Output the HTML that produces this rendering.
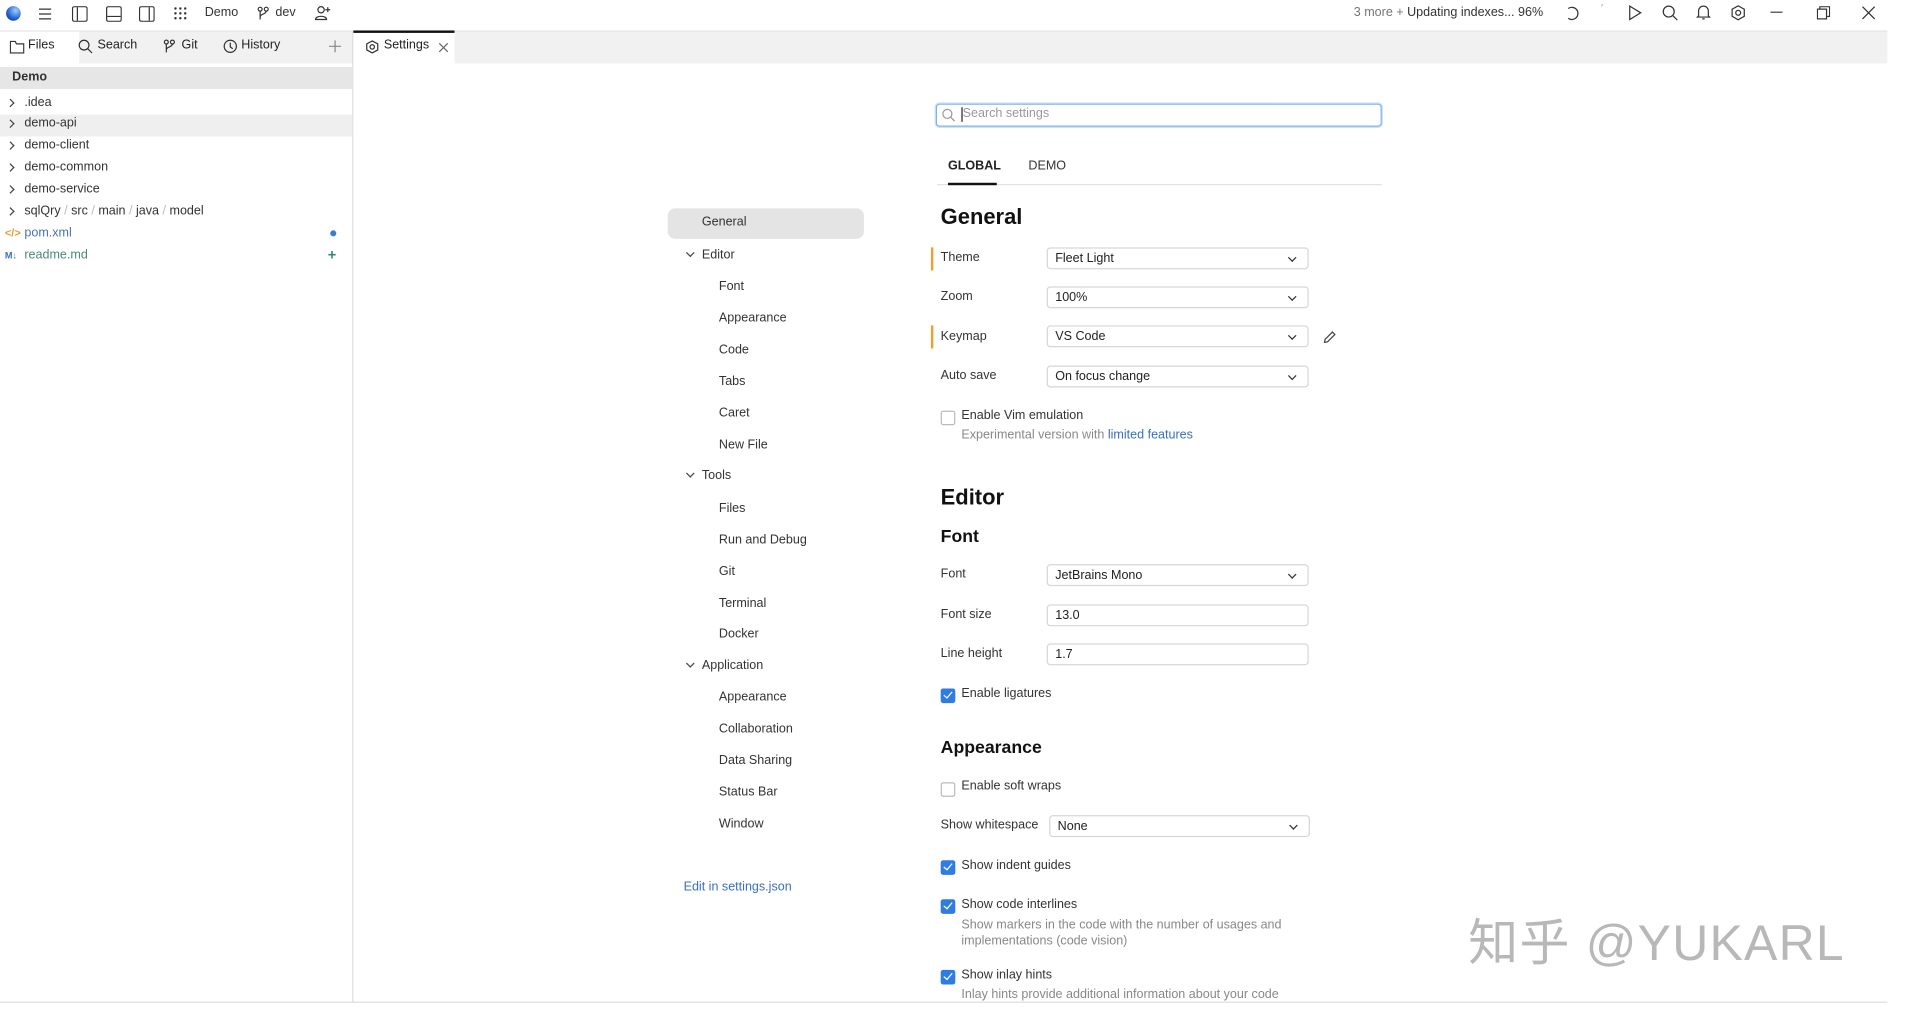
<!DOCTYPE html>
<html><head><meta charset="utf-8"><style>
html,body{margin:0;padding:0;background:#fff;width:1910px;height:1012px;overflow:hidden}
#w{position:absolute;left:0;top:0;width:1570px;height:832px;transform:scale(1.2185);transform-origin:0 0;font-family:"Liberation Sans",Arial,sans-serif;font-size:10.5px;color:#222}
.a{position:absolute;white-space:nowrap}
svg{position:absolute}
.dd{position:absolute;left:859px;width:215px;height:18px;border:1px solid #d6d6d6;border-radius:3px;background:#fff;box-sizing:border-box;padding-left:6px;line-height:17px;font-size:10.3px}
.dd.s::after{content:"";position:absolute;right:10px;top:5px;width:4px;height:4px;border-right:1.2px solid #333;border-bottom:1.2px solid #333;transform:rotate(45deg)}
.cb{position:absolute;left:772px;width:10px;height:10px;border:1px solid #bbb;border-radius:2px;background:#fff}
.cb.on{background:#2f7de1;border-color:#2f7de1}
.cb.on::after{content:"";position:absolute;left:3px;top:0px;width:3px;height:6px;border-right:1.5px solid #fff;border-bottom:1.5px solid #fff;transform:rotate(40deg)}
.lb{position:absolute;left:772px;font-size:10.3px;color:#333}
.nv{position:absolute;font-size:10.3px;color:#333}
.chev{position:absolute;width:4px;height:4px;border-right:1.2px solid #444;border-bottom:1.2px solid #444}
.tr{position:absolute;left:6px;width:4px;height:4px;border-right:1.2px solid #444;border-bottom:1.2px solid #444;transform:rotate(-45deg)}
.ft{position:absolute;left:20px;font-size:10.3px;color:#333}
.hd{position:absolute;left:772px;font-weight:bold;color:#111}
.sub{position:absolute;left:789px;font-size:10.3px;color:#888}
</style></head><body><div id="w">
<div class="a" style="left:0;top:0;width:1570px;height:25px;border-bottom:1px solid #e2e2e2;background:#fff"></div>
<div class="a" style="left:5px;top:5px;width:12px;height:12px;border-radius:50%;background:radial-gradient(circle at 65% 30%,#9fd0ff,#1e5fd0 60%,#0b2c80)"></div>
<svg style="left:31px;top:6px" width="12" height="11"><path d="M1 1.5H11M1 5.5H11M1 9.5H11" stroke="#333" stroke-width="1"/></svg>
<svg style="left:59px;top:5px" width="13" height="13"><rect x="0.5" y="0.5" width="12" height="12" rx="1.5" fill="none" stroke="#333"/><path d="M4.5 1V12" stroke="#333"/></svg>
<svg style="left:87px;top:5px" width="13" height="13"><rect x="0.5" y="0.5" width="12" height="12" rx="1.5" fill="none" stroke="#333"/><path d="M1 8.5H12" stroke="#333"/></svg>
<svg style="left:114px;top:5px" width="13" height="13"><rect x="0.5" y="0.5" width="12" height="12" rx="1.5" fill="none" stroke="#333"/><path d="M8.5 1V12" stroke="#333"/></svg>
<svg style="left:142px;top:5px" width="12" height="12"><g fill="#333"><circle cx="2" cy="2" r="1"/><circle cx="6" cy="2" r="1"/><circle cx="10" cy="2" r="1"/><circle cx="2" cy="6" r="1"/><circle cx="6" cy="6" r="1"/><circle cx="10" cy="6" r="1"/><circle cx="2" cy="10" r="1"/><circle cx="6" cy="10" r="1"/><circle cx="10" cy="10" r="1"/></g></svg>
<div class="a" style="left:168px;top:5px;font-size:10.3px;color:#333">Demo</div>
<svg style="left:211px;top:5px" width="10" height="12"><circle cx="2.5" cy="2.5" r="1.6" fill="none" stroke="#333"/><circle cx="7.5" cy="2.5" r="1.6" fill="none" stroke="#333"/><path d="M2.5 4V11M7.5 4C7.5 7 2.5 6 2.5 9" fill="none" stroke="#333"/></svg>
<div class="a" style="left:226px;top:5px;font-size:10.3px;color:#333">dev</div>
<svg style="left:258px;top:4px" width="14" height="13"><circle cx="5.5" cy="4" r="2.6" fill="none" stroke="#333"/><path d="M1 12C1 8.5 10 8.5 10 12Z" fill="none" stroke="#333"/><path d="M11 2V6M9 4H13" stroke="#333"/></svg>
<div class="a" style="left:1111px;top:5px;font-size:10.3px;color:#777">3 more + <span style="color:#333">Updating indexes... 96%</span></div>
<svg style="left:1284px;top:5px" width="12" height="12"><path d="M3 2A5 5 0 1 1 3 10" fill="none" stroke="#333"/></svg>
<div class="a" style="left:1314px;top:2px;font-size:8px;color:#5a9ad8">′</div>
<svg style="left:1336px;top:4px" width="12" height="13"><path d="M1.5 1L10.5 6.5L1.5 12Z" fill="none" stroke="#333"/></svg>
<svg style="left:1364px;top:4px" width="13" height="13"><circle cx="5.5" cy="5.5" r="4.5" fill="none" stroke="#333"/><path d="M9 9L12.5 12.5" stroke="#333"/></svg>
<svg style="left:1392px;top:3px" width="12" height="14"><path d="M2 10V6A4 4 0 0 1 10 6V10L11 11H1Z" fill="none" stroke="#333"/><path d="M5 12.5H7" stroke="#333"/></svg>
<svg style="left:1420px;top:4px" width="13" height="13"><path d="M6.5 0.8L11.5 3.6V9.4L6.5 12.2L1.5 9.4V3.6Z" fill="none" stroke="#333"/><circle cx="6.5" cy="6.5" r="2" fill="none" stroke="#333"/></svg>
<svg style="left:1453px;top:9px" width="10" height="2"><path d="M0 1H10" stroke="#333"/></svg>
<svg style="left:1491px;top:5px" width="11" height="11"><rect x="0.5" y="2.5" width="7.5" height="8" fill="none" stroke="#333"/><path d="M2.5 2.5V0.5H10.5V8.5H8" fill="none" stroke="#333"/></svg>
<svg style="left:1528px;top:5px" width="11" height="11"><path d="M0.5 0.5L10.5 10.5M10.5 0.5L0.5 10.5" stroke="#333"/></svg>
<div class="a" style="left:0;top:26px;width:1549px;height:26px;background:#f1f1f1"></div>
<div class="a" style="left:0;top:26px;width:65px;height:26px;background:#fff"></div>
<svg style="left:8px;top:33px" width="12" height="11"><path d="M0.5 1V10.5H11.5V3H5.5L4.5 1Z" fill="none" stroke="#333"/></svg>
<div class="a" style="left:23px;top:32px;font-size:10.3px">Files</div>
<svg style="left:64px;top:32px" width="12" height="12"><circle cx="5" cy="5" r="4" fill="none" stroke="#333"/><path d="M8 8L11.5 11.5" stroke="#333"/></svg>
<div class="a" style="left:80px;top:32px;font-size:10.3px">Search</div>
<svg style="left:134px;top:32px" width="10" height="12"><circle cx="2.5" cy="2.5" r="1.6" fill="none" stroke="#333"/><circle cx="7.5" cy="2.5" r="1.6" fill="none" stroke="#333"/><path d="M2.5 4V11M7.5 4C7.5 7 2.5 6 2.5 9" fill="none" stroke="#333"/></svg>
<div class="a" style="left:149px;top:32px;font-size:10.3px">Git</div>
<svg style="left:183px;top:32px" width="12" height="12"><circle cx="6" cy="6" r="5" fill="none" stroke="#333"/><path d="M6 3V6.5L8 8" fill="none" stroke="#333"/></svg>
<div class="a" style="left:198px;top:32px;font-size:10.3px">History</div>
<svg style="left:270px;top:33px" width="10" height="10"><path d="M5 0V10M0 5H10" stroke="#888"/></svg>
<div class="a" style="left:289px;top:26px;width:1px;height:796px;background:#dedede"></div>
<div class="a" style="left:290px;top:25px;width:83px;height:27px;background:#fff;border-top:2px solid #111;box-sizing:border-box"></div>
<svg style="left:300px;top:33px" width="11" height="11"><path d="M5.5 0.6L10 3V8L5.5 10.4L1 8V3Z" fill="none" stroke="#333"/><circle cx="5.5" cy="5.5" r="1.8" fill="none" stroke="#333"/></svg>
<div class="a" style="left:315px;top:32px;font-size:10.3px">Settings</div>
<svg style="left:360px;top:35px" width="8" height="8"><path d="M0.5 0.5L7.5 7.5M7.5 0.5L0.5 7.5" stroke="#666"/></svg>
<div class="a" style="left:0;top:55px;width:289px;height:18px;background:#e6e6e6"></div>
<div class="a" style="left:10px;top:58px;font-size:10.3px;font-weight:bold;color:#333">Demo</div>
<div class="a" style="left:0;top:94px;width:289px;height:18px;background:#efefef"></div>
<div class="tr" style="top:82px"></div><div class="ft" style="top:79px">.idea</div>
<div class="tr" style="top:99px"></div><div class="ft" style="top:96px">demo-api</div>
<div class="tr" style="top:117px"></div><div class="ft" style="top:114px">demo-client</div>
<div class="tr" style="top:135px"></div><div class="ft" style="top:132px">demo-common</div>
<div class="tr" style="top:153px"></div><div class="ft" style="top:150px">demo-service</div>
<div class="tr" style="top:171px"></div><div class="ft" style="top:168px">sqlQry <span style="color:#bbb">/</span> src <span style="color:#bbb">/</span> main <span style="color:#bbb">/</span> java <span style="color:#bbb">/</span> model</div>
<div class="a" style="left:4px;top:186px;font-size:9px;color:#e0a030;font-weight:bold">&lt;/&gt;</div>
<div class="ft" style="top:186px;color:#4a74b0">pom.xml</div>
<div class="a" style="left:271px;top:189px;width:5px;height:5px;border-radius:50%;background:#3a7bd5"></div>
<div class="a" style="left:4px;top:205px;font-size:7.5px;color:#3a6fc0;font-weight:bold">M↓</div>
<div class="ft" style="top:204px;color:#4a8a7a">readme.md</div>
<div class="a" style="left:269px;top:202px;font-size:12px;color:#3a8a6a;font-weight:bold">+</div>
<div class="a" style="left:548px;top:171px;width:161px;height:25px;border-radius:6px;background:#e4e4e4"></div>
<div class="nv" style="left:576px;top:177px">General</div>
<div class="chev" style="left:564px;top:205px;transform:rotate(45deg)"></div><div class="nv" style="left:576px;top:204px">Editor</div>
<div class="nv" style="left:590px;top:230px">Font</div>
<div class="nv" style="left:590px;top:256px">Appearance</div>
<div class="nv" style="left:590px;top:282px">Code</div>
<div class="nv" style="left:590px;top:308px">Tabs</div>
<div class="nv" style="left:590px;top:334px">Caret</div>
<div class="nv" style="left:590px;top:360px">New File</div>
<div class="chev" style="left:564px;top:386px;transform:rotate(45deg)"></div><div class="nv" style="left:576px;top:385px">Tools</div>
<div class="nv" style="left:590px;top:412px">Files</div>
<div class="nv" style="left:590px;top:438px">Run and Debug</div>
<div class="nv" style="left:590px;top:464px">Git</div>
<div class="nv" style="left:590px;top:490px">Terminal</div>
<div class="nv" style="left:590px;top:515px">Docker</div>
<div class="chev" style="left:564px;top:542px;transform:rotate(45deg)"></div><div class="nv" style="left:576px;top:541px">Application</div>
<div class="nv" style="left:590px;top:567px">Appearance</div>
<div class="nv" style="left:590px;top:593px">Collaboration</div>
<div class="nv" style="left:590px;top:619px">Data Sharing</div>
<div class="nv" style="left:590px;top:645px">Status Bar</div>
<div class="nv" style="left:590px;top:671px">Window</div>
<div class="nv" style="left:561px;top:723px;color:#3a6fc0">Edit in settings.json</div>
<div class="a" style="left:768px;top:85px;width:366px;height:19px;border:1px solid #7fb2ea;box-shadow:0 0 0 1px #cfe2f8;border-radius:3px;box-sizing:border-box"></div>
<svg style="left:773px;top:89px" width="11" height="11"><circle cx="4.5" cy="4.5" r="3.7" fill="none" stroke="#999"/><path d="M7.2 7.2L10.5 10.5" stroke="#999"/></svg>
<div class="a" style="left:789px;top:88px;width:1px;height:12px;background:#222"></div>
<div class="a" style="left:790px;top:88px;font-size:10.3px;color:#999">Search settings</div>
<div class="a" style="left:778px;top:131px;font-size:10.3px;font-weight:bold;color:#222">GLOBAL</div>
<div class="a" style="left:844px;top:131px;font-size:10.3px;color:#333">DEMO</div>
<div class="a" style="left:769px;top:151px;width:365px;height:1px;background:#e2e2e2"></div>
<div class="a" style="left:778px;top:150px;width:40px;height:2px;background:#111"></div>
<div class="hd" style="top:168px;font-size:18px">General</div>
<div class="a" style="left:764px;top:203px;width:2px;height:19px;background:#f0a030"></div>
<div class="lb" style="top:206px">Theme</div><div class="dd s" style="top:203px">Fleet Light</div>
<div class="lb" style="top:238px">Zoom</div><div class="dd s" style="top:235px">100%</div>
<div class="a" style="left:764px;top:267px;width:2px;height:19px;background:#f0a030"></div>
<div class="lb" style="top:271px">Keymap</div><div class="dd s" style="top:267px">VS Code</div>
<svg style="left:1085px;top:271px" width="12" height="12"><path d="M2 10L2.5 7.5L8.5 1.5L10.5 3.5L4.5 9.5Z" fill="none" stroke="#444"/></svg>
<div class="lb" style="top:303px">Auto save</div><div class="dd s" style="top:300px">On focus change</div>
<div class="cb" style="top:337px"></div><div class="a" style="left:789px;top:336px;font-size:10.3px;color:#333">Enable Vim emulation</div>
<div class="sub" style="top:352px">Experimental version with <span style="color:#3a6fc0">limited features</span></div>
<div class="hd" style="top:398px;font-size:18px">Editor</div>
<div class="hd" style="top:433px;font-size:14.5px">Font</div>
<div class="lb" style="top:466px">Font</div><div class="dd s" style="top:463px">JetBrains Mono</div>
<div class="lb" style="top:499px">Font size</div><div class="dd" style="top:496px">13.0</div>
<div class="lb" style="top:531px">Line height</div><div class="dd" style="top:528px">1.7</div>
<div class="cb on" style="top:565px"></div><div class="a" style="left:789px;top:564px;font-size:10.3px;color:#333">Enable ligatures</div>
<div class="hd" style="top:606px;font-size:14.5px">Appearance</div>
<div class="cb" style="top:642px"></div><div class="a" style="left:789px;top:640px;font-size:10.3px;color:#333">Enable soft wraps</div>
<div class="lb" style="top:672px">Show whitespace</div><div class="dd s" style="top:669px;left:861px;width:214px">None</div>
<div class="cb on" style="top:706px"></div><div class="a" style="left:789px;top:705px;font-size:10.3px;color:#333">Show indent guides</div>
<div class="cb on" style="top:738px"></div><div class="a" style="left:789px;top:737px;font-size:10.3px;color:#333">Show code interlines</div>
<div class="sub" style="top:754px">Show markers in the code with the number of usages and</div>
<div class="sub" style="top:767px">implementations (code vision)</div>
<div class="cb on" style="top:796px"></div><div class="a" style="left:789px;top:795px;font-size:10.3px;color:#333">Show inlay hints</div>
<div class="sub" style="top:811px">Inlay hints provide additional information about your code</div>
<div class="a" style="left:0;top:822px;width:1570px;height:12px;background:#fff;border-top:1px solid #ddd"></div>
<div class="a" style="left:1549px;top:0;width:22px;height:832px;background:#fff"></div>
<div class="a" style="left:1205px;top:740px;font-size:41px;color:#b8b8b8;font-family:'Liberation Sans','Noto Sans CJK SC',sans-serif;letter-spacing:1px">知乎 @YUKARL</div>
</div></body></html>
